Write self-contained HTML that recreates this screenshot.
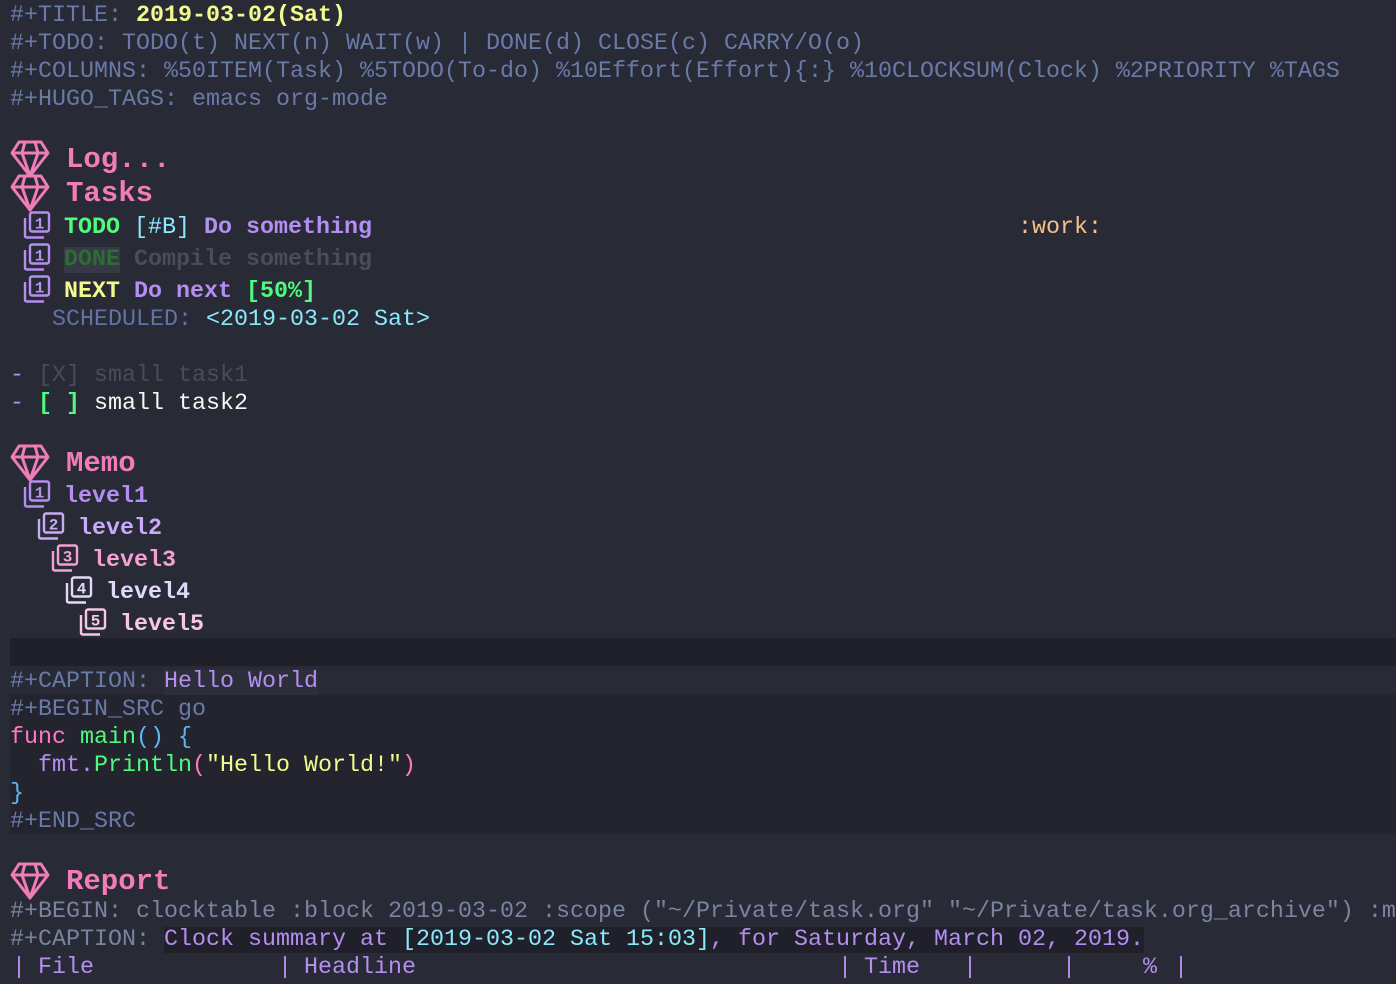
<!DOCTYPE html>
<html><head><meta charset="utf-8"><style>
html,body{margin:0;padding:0;background:#282a36;width:1396px;height:984px;overflow:hidden;position:relative}
#w{position:absolute;left:0;top:2px;width:1396px;height:984px}
.l{position:absolute;left:10px;height:28px;line-height:28px;white-space:pre;font-family:"Liberation Mono",monospace;font-size:23.33px;color:#6272a4}
.b{font-weight:bold}
.h{font-size:29px;font-weight:bold;color:#f07cb8;height:34px;line-height:34px}
svg{position:absolute}
.m{color:#6a7aa8}
</style></head><body>
<svg width="0" height="0" style="position:absolute">
<defs>
<symbol id="gem" viewBox="0 0 40 40"><g fill="none" stroke="#f07cb8" stroke-width="3" stroke-linejoin="round"><path d="M9 3H31L38 14L20 37L2 14Z"/><path d="M2 14H38"/><path d="M15 3L12 14L20 37L28 14L25 3"/></g></symbol>
</defs></svg>
<div style="position:absolute;left:10px;top:638px;width:1386px;height:28px;background:#1f2029"></div>
<div style="position:absolute;left:10px;top:694px;width:1386px;height:140px;background:#23242e"></div>
<div id="w">
<div class="l m" style="top:0">#+TITLE: <span class="b" style="color:#f1fa8c">2019-03-02(Sat)</span></div>
<div class="l m" style="top:28px">#+TODO: TODO(t) NEXT(n) WAIT(w) | DONE(d) CLOSE(c) CARRY/O(o)</div>
<div class="l m" style="top:56px">#+COLUMNS: %50ITEM(Task) %5TODO(To-do) %10Effort(Effort){:} %10CLOCKSUM(Clock) %2PRIORITY %TAGS</div>
<div class="l m" style="top:84px">#+HUGO_TAGS: emacs org-mode</div>

<svg style="left:10px;top:137px" width="40" height="40"><use href="#gem"/></svg>
<div class="l h" style="top:141px;left:66px">Log...</div>
<svg style="left:10px;top:171px" width="40" height="40"><use href="#gem"/></svg>
<div class="l h" style="top:175px;left:66px">Tasks</div>

<svg style="left:23px;top:209px" width="28" height="28" viewBox="0 0 28 28"><g fill="none" stroke="#b48ef0" stroke-width="2.4"><rect x="7" y="1.5" width="19" height="19" rx="2"/><path d="M2 7V24.5Q2 26.5 4 26.5H21"/></g><text x="16.5" y="17.5" font-family="Liberation Mono" font-size="16" font-weight="bold" fill="#b48ef0" text-anchor="middle">1</text></svg>
<div class="l b" style="top:212px;left:64px"><span style="color:#50fa7b">TODO</span> <span style="color:#8be9fd;font-weight:normal">[#B]</span> <span style="color:#b48ef0">Do something</span></div>
<div class="l" style="top:212px;left:1018px;color:#f5c08a">:work:</div>

<svg style="left:23px;top:241px" width="28" height="28" viewBox="0 0 28 28"><g fill="none" stroke="#b48ef0" stroke-width="2.4"><rect x="7" y="1.5" width="19" height="19" rx="2"/><path d="M2 7V24.5Q2 26.5 4 26.5H21"/></g><text x="16.5" y="17.5" font-family="Liberation Mono" font-size="16" font-weight="bold" fill="#b48ef0" text-anchor="middle">1</text></svg>
<div class="l b" style="top:244px;left:64px;color:#4a4c58"><span style="color:#2f6b36;background:#363845">DONE</span> Compile something</div>

<svg style="left:23px;top:273px" width="28" height="28" viewBox="0 0 28 28"><g fill="none" stroke="#b48ef0" stroke-width="2.4"><rect x="7" y="1.5" width="19" height="19" rx="2"/><path d="M2 7V24.5Q2 26.5 4 26.5H21"/></g><text x="16.5" y="17.5" font-family="Liberation Mono" font-size="16" font-weight="bold" fill="#b48ef0" text-anchor="middle">1</text></svg>
<div class="l b" style="top:276px;left:64px"><span style="color:#f1fa8c">NEXT</span> <span style="color:#b48ef0">Do next</span> <span style="color:#50fa7b">[50%]</span></div>
<div class="l" style="top:304px;left:52px;color:#6272a4">SCHEDULED: <span style="color:#8be9fd">&lt;2019-03-02 Sat&gt;</span></div>

<div class="l" style="top:360px;color:#4a4c58"><span style="color:#b48ef0">-</span> [X] small task1</div>
<div class="l" style="top:388px;color:#f8f8f2"><span style="color:#b48ef0">-</span> <span class="b" style="color:#50fa7b">[ ]</span> small task2</div>

<svg style="left:10px;top:441px" width="40" height="40"><use href="#gem"/></svg>
<div class="l h" style="top:445px;left:66px">Memo</div>

<svg style="left:23px;top:478px" width="28" height="28" viewBox="0 0 28 28"><g fill="none" stroke="#b48ef0" stroke-width="2.4"><rect x="7" y="1.5" width="19" height="19" rx="2"/><path d="M2 7V24.5Q2 26.5 4 26.5H21"/></g><text x="16.5" y="17.5" font-family="Liberation Mono" font-size="16" font-weight="bold" fill="#b48ef0" text-anchor="middle">1</text></svg>
<div class="l b" style="top:481px;left:64px;color:#b48ef0">level1</div>
<svg style="left:37px;top:510px" width="28" height="28" viewBox="0 0 28 28"><g fill="none" stroke="#c8aaf8" stroke-width="2.4"><rect x="7" y="1.5" width="19" height="19" rx="2"/><path d="M2 7V24.5Q2 26.5 4 26.5H21"/></g><text x="16.5" y="17.5" font-family="Liberation Mono" font-size="16" font-weight="bold" fill="#c8aaf8" text-anchor="middle">2</text></svg>
<div class="l b" style="top:513px;left:78px;color:#c8aaf8">level2</div>
<svg style="left:51px;top:542px" width="28" height="28" viewBox="0 0 28 28"><g fill="none" stroke="#f5a0d2" stroke-width="2.4"><rect x="7" y="1.5" width="19" height="19" rx="2"/><path d="M2 7V24.5Q2 26.5 4 26.5H21"/></g><text x="16.5" y="17.5" font-family="Liberation Mono" font-size="16" font-weight="bold" fill="#f5a0d2" text-anchor="middle">3</text></svg>
<div class="l b" style="top:545px;left:92px;color:#f5a0d2">level3</div>
<svg style="left:65px;top:574px" width="28" height="28" viewBox="0 0 28 28"><g fill="none" stroke="#e2d8fa" stroke-width="2.4"><rect x="7" y="1.5" width="19" height="19" rx="2"/><path d="M2 7V24.5Q2 26.5 4 26.5H21"/></g><text x="16.5" y="17.5" font-family="Liberation Mono" font-size="16" font-weight="bold" fill="#e2d8fa" text-anchor="middle">4</text></svg>
<div class="l b" style="top:577px;left:106px;color:#e2d8fa">level4</div>
<svg style="left:79px;top:606px" width="28" height="28" viewBox="0 0 28 28"><g fill="none" stroke="#f8c6e6" stroke-width="2.4"><rect x="7" y="1.5" width="19" height="19" rx="2"/><path d="M2 7V24.5Q2 26.5 4 26.5H21"/></g><text x="16.5" y="17.5" font-family="Liberation Mono" font-size="16" font-weight="bold" fill="#f8c6e6" text-anchor="middle">5</text></svg>
<div class="l b" style="top:609px;left:120px;color:#f8c6e6">level5</div>

<div class="l" style="top:666px;color:#6a7aa8">#+CAPTION: <span style="color:#b48ef0;background:#2c2e3a">Hello World</span></div>
<div class="l" style="top:694px;color:#6a7aa8">#+BEGIN_SRC go</div>
<div class="l" style="top:722px;color:#ff79c6">func <span style="color:#50fa7b">main</span><span style="color:#62b6f0">() {</span></div>
<div class="l" style="top:750px;color:#b48ef0">  fmt.<span style="color:#50fa7b">Println</span><span style="color:#ff79c6">(</span><span style="color:#f1fa8c">"Hello World!"</span><span style="color:#ff79c6">)</span></div>
<div class="l" style="top:778px;color:#62b6f0">}</div>
<div class="l" style="top:806px;color:#6a7aa8">#+END_SRC</div>

<svg style="left:10px;top:859px" width="40" height="40"><use href="#gem"/></svg>
<div class="l h" style="top:863px;left:66px">Report</div>
<div class="l" style="top:896px;color:#7a84a0">#+BEGIN: clocktable :block 2019-03-02 :scope ("~/Private/task.org" "~/Private/task.org_archive") :m</div>
<div class="l" style="top:924px;color:#7a84a0">#+CAPTION: <span style="color:#b48ef0;background:#1f2029">Clock summary at <span style="color:#8be9fd">[2019-03-02 Sat 15:03]</span>, for Saturday, March 02, 2019.</span></div>
<div class="l" style="top:952px;left:12px;color:#b48ef0">|</div>
<div class="l" style="top:952px;left:38px;color:#b48ef0">File</div>
<div class="l" style="top:952px;left:278px;color:#b48ef0">|</div>
<div class="l" style="top:952px;left:304px;color:#b48ef0">Headline</div>
<div class="l" style="top:952px;left:838px;color:#b48ef0">|</div>
<div class="l" style="top:952px;left:864px;color:#b48ef0">Time</div>
<div class="l" style="top:952px;left:963px;color:#b48ef0">|</div>
<div class="l" style="top:952px;left:1062px;color:#b48ef0">|</div>
<div class="l" style="top:952px;left:1143px;color:#b48ef0">%</div>
<div class="l" style="top:952px;left:1174px;color:#b48ef0">|</div>
</div>
</body></html>
